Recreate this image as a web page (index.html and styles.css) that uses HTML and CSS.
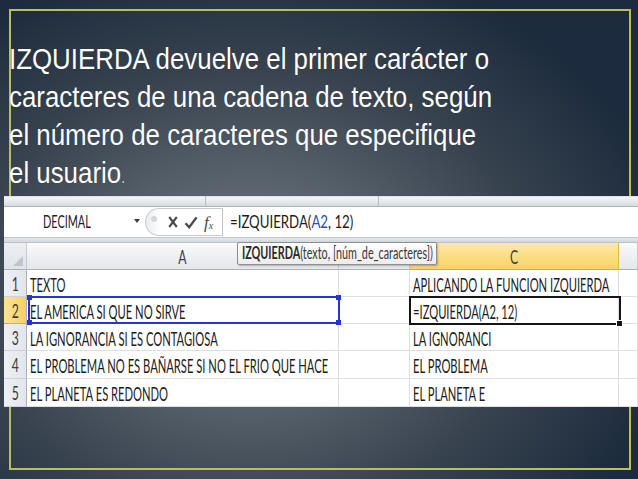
FILE: index.html
```html
<!DOCTYPE html>
<html lang="es">
<head>
<meta charset="utf-8">
<title>IZQUIERDA</title>
<link rel="stylesheet" href="styles.css">
</head>
<body>
<div class="slide">
  <div class="frame"></div>
  <h1 class="title"><span class="title-text">IZQUIERDA devuelve el primer carácter o<br>caracteres de una cadena de texto, según<br>el número de caracteres que especifique<br>el usuario<span class="dot">.</span></span></h1>

  <div class="excel">
    <div class="ribbon"><span class="rdiv d1"></span><span class="rdiv d2"></span></div>
    <div class="fbar">
      <div class="namebox"><span class="t">DECIMAL</span><span class="arrow"></span></div>
      <div class="fbtns">
        <span class="knob"></span>
        <svg class="ico-x" width="10" height="12" viewBox="0 0 10 12"><path d="M1.2 1 L8.8 11 M8.8 1 L1.2 11" stroke="#4b4b4b" stroke-width="2.1" fill="none"/></svg>
        <svg class="ico-ok" width="14" height="13" viewBox="0 0 14 13"><path d="M1.5 7.2 L5.2 11.2 L12.6 1.4" stroke="#4b4b4b" stroke-width="2.4" fill="none"/></svg>
        <span class="fx"><i>f</i><sub>x</sub></span>
      </div>
      <div class="formula"><span class="t">=IZQUIERDA(<span class="ref">A2</span>, 12)</span></div>
    </div>
    <div class="gap"></div>

    <div class="grid">
      <div class="hd corner"><span class="tri"></span></div>
      <div class="hd"><span class="t c">A</span></div>
      <div class="hd"></div>
      <div class="hd act"><span class="t c">C</span></div>
      <div class="hd"></div>

      <div class="rh"><span class="t c">1</span></div>
      <div class="cell"><span class="t">TEXTO</span></div>
      <div class="cell"></div>
      <div class="cell"><span class="t">APLICANDO LA FUNCION IZQUIERDA</span></div>
      <div class="cell"></div>

      <div class="rh act"><span class="t c">2</span></div>
      <div class="cell"><span class="t">EL AMERICA SI QUE NO SIRVE</span></div>
      <div class="cell"></div>
      <div class="cell"><span class="t">=IZQUIERDA(A2, 12)</span></div>
      <div class="cell"></div>

      <div class="rh"><span class="t c">3</span></div>
      <div class="cell"><span class="t">LA IGNORANCIA SI ES CONTAGIOSA</span></div>
      <div class="cell"></div>
      <div class="cell"><span class="t">LA IGNORANCI</span></div>
      <div class="cell"></div>

      <div class="rh"><span class="t c">4</span></div>
      <div class="cell"><span class="t">EL PROBLEMA NO ES BAÑARSE SI NO EL FRIO QUE HACE</span></div>
      <div class="cell"></div>
      <div class="cell"><span class="t">EL PROBLEMA</span></div>
      <div class="cell"></div>

      <div class="rh"><span class="t c">5</span></div>
      <div class="cell"><span class="t">EL PLANETA ES REDONDO</span></div>
      <div class="cell"></div>
      <div class="cell"><span class="t">EL PLANETA E</span></div>
      <div class="cell"></div>

      <div class="sel-ref"><i class="h tl"></i><i class="h tr"></i><i class="h bl"></i><i class="h br"></i></div>
      <div class="sel-act"><i class="fill"></i></div>
    </div>

    <div class="tip"><span class="t"><b>IZQUIERDA</b>(texto, [núm_de_caracteres])</span></div>
  </div>
</div>
</body>
</html>
```

FILE: styles.css
```css
html, body {
  margin: 0;
  padding: 0;
  background: #17263a;
}

.slide {
  position: relative;
  width: 638px;
  height: 479px;
  overflow: hidden;
  background:
    radial-gradient(ellipse 430px 340px at 250px 290px, #757c82 0%, #5b646e 30%, #38434f 65%, #1c2b3d 100%),
    #17263a;
  font-family: "Liberation Sans", Arial, sans-serif;
}

.frame {
  position: absolute;
  left: 9px;
  top: 9px;
  width: 618px;
  height: 457px;
  border: 2px solid #bcbf55;
}

.title {
  position: relative;
  box-sizing: border-box;
  height: 196px;
  margin: 0;
  padding: 40px 0 0 9px;
  font-family: "Liberation Sans", Arial, sans-serif;
  font-weight: normal;
  font-size: 30px;
  line-height: 38px;
  color: #ffffff;
  text-shadow: 0 0 1px rgba(0,0,0,.25);
  white-space: nowrap;
}

.title-text {
  display: inline-block;
  transform: scaleX(.862);
  transform-origin: 0 0;
}

.title .dot {
  font-size: 16px;
  color: #d9dde2;
}

/* ---------- Excel screenshot ---------- */
.excel {
  position: relative;
  margin: 0 0 0 4px;
  width: 634px;
  font-family: Lato, "Open Sans", sans-serif;
  color: #1c1c1c;
}

.t {
  display: inline-block;
  white-space: nowrap;
  transform: translateY(2px) scaleX(.605);
  transform-origin: 0 50%;
}

.t.c {
  transform-origin: 50% 50%;
}

.ribbon {
  position: relative;
  height: 10px;
  background: linear-gradient(#cfd3d8 0, #f4f5f7 1px, #e6e9ec 55%, #d6dadf 100%);
}

.rdiv {
  position: absolute;
  top: 0;
  width: 1px;
  height: 10px;
  background: #b7bcc3;
}
.rdiv.d1 { left: 201px; }
.rdiv.d2 { left: 374px; }

.fbar {
  display: flex;
  align-items: stretch;
  height: 32px;
  border-top: 1px solid #aeb4bc;
  border-bottom: 1px solid #c3c8ce;
  background: #ffffff;
  box-sizing: border-box;
}

.namebox {
  position: relative;
  width: 141px;
  padding-left: 39px;
  box-sizing: border-box;
  font-size: 17px;
  line-height: 29px;
}

.namebox .t { transform: scaleX(.64); }

.arrow {
  position: absolute;
  left: 130px;
  top: 12px;
  width: 0;
  height: 0;
  border-left: 3px solid transparent;
  border-right: 3px solid transparent;
  border-top: 4px solid #3e3e3e;
}

.fbtns {
  display: flex;
  align-items: center;
  width: 78px;
  margin: 1px 0;
  box-sizing: border-box;
  border: 1px solid #c7cbd0;
  border-right: 1px solid #b9bec4;
  border-radius: 14px 0 0 14px;
  background: linear-gradient(90deg, #e9ebee 0, #ffffff 14px);
}

.knob {
  width: 6px;
  height: 6px;
  margin: -6px 0 0 5px;
  border-radius: 50%;
  background: #d3d6da;
}

.ico-x { margin-left: 11px; }
.ico-ok { margin-left: 6px; }

.fx {
  margin-left: 6px;
  font-family: "Liberation Serif", "DejaVu Serif", serif;
  font-size: 17px;
  color: #4a4a4a;
  line-height: 1;
}
.fx i { font-style: italic; }
.fx sub { font-size: 10px; font-style: italic; vertical-align: -1px; }

.formula {
  flex: 1;
  padding-left: 7px;
  font-size: 18px;
  line-height: 29px;
}

.formula .t { transform: scaleX(.735); }

.ref { color: #2c49c4; }

.gap {
  height: 5px;
  background: linear-gradient(#e4e7eb, #d3d8de);
  border-bottom: 1px solid #bcc2c9;
  box-sizing: border-box;
}

.grid {
  position: relative;
  display: grid;
  grid-template-columns: 23px 312px 71px 209px 19px;
  grid-template-rows: 27px 27px 27px 27px 28px 28px;
  background: #ffffff;
  font-size: 18.5px;
}

.hd {
  box-sizing: border-box;
  border-right: 1px solid #c5cad0;
  border-bottom: 1px solid #aab1ba;
  background: linear-gradient(#f9fafb, #e4e7eb);
  text-align: center;
  line-height: 27px;
  color: #3f3f3f;
}

.hd.act {
  background: linear-gradient(#fdeaa3, #f9d365);
  border-right-color: #e3b94e;
  border-bottom-color: #d7a93d;
}

.corner {
  position: relative;
  background: linear-gradient(#eceff2, #dfe3e8);
}

.tri {
  position: absolute;
  right: 3px;
  bottom: 3px;
  width: 0;
  height: 0;
  border-left: 10px solid transparent;
  border-bottom: 10px solid #c0c5cb;
}

.rh {
  box-sizing: border-box;
  border-right: 1px solid #aab1ba;
  border-bottom: 1px solid #cdd2d8;
  background: linear-gradient(90deg, #eef0f3, #e2e6ea);
  text-align: center;
  line-height: 27px;
  color: #3c3c3c;
}

.rh.act {
  background: linear-gradient(90deg, #fbe49a, #f8d060);
  border-bottom-color: #dcae44;
}

.rh .t { transform: translateY(1px) scaleX(.66); }
.hd .t { transform: translateY(1px) scaleX(.66); }

.cell {
  box-sizing: border-box;
  border-right: 1px solid #dcdfe3;
  border-bottom: 1px solid #dcdfe3;
  padding-left: 3px;
  line-height: 27px;
  overflow: visible;
}

.sel-ref {
  position: absolute;
  left: 24px;
  top: 53px;
  width: 312px;
  height: 28px;
  box-sizing: border-box;
  border: 2px solid #2534d6;
}

.h {
  position: absolute;
  width: 5px;
  height: 5px;
  background: #2534d6;
}
.h.tl { left: -3px; top: -3px; }
.h.tr { right: -3px; top: -3px; }
.h.bl { left: -3px; bottom: -3px; }
.h.br { right: -3px; bottom: -3px; }

.sel-act {
  position: absolute;
  left: 405px;
  top: 53px;
  width: 212px;
  height: 29px;
  box-sizing: border-box;
  border: 2px solid #151515;
}

.sel-act .fill {
  position: absolute;
  right: -4px;
  bottom: -4px;
  width: 5px;
  height: 5px;
  background: #151515;
  border: 1px solid #ffffff;
}

.tip {
  position: absolute;
  left: 233px;
  top: 46px;
  width: 200px;
  height: 23px;
  box-sizing: border-box;
  padding-left: 4px;
  border: 1px solid #8e8f91;
  border-radius: 2px;
  background: linear-gradient(#ffffff, #ececed);
  box-shadow: 1px 1px 2px rgba(0,0,0,.25);
  font-size: 16.5px;
  line-height: 21px;
  color: #3a3a3a;
}
.tip .t { transform: scaleX(.655); }
.tip b { font-weight: bold; color: #2a2a2a; }
```
